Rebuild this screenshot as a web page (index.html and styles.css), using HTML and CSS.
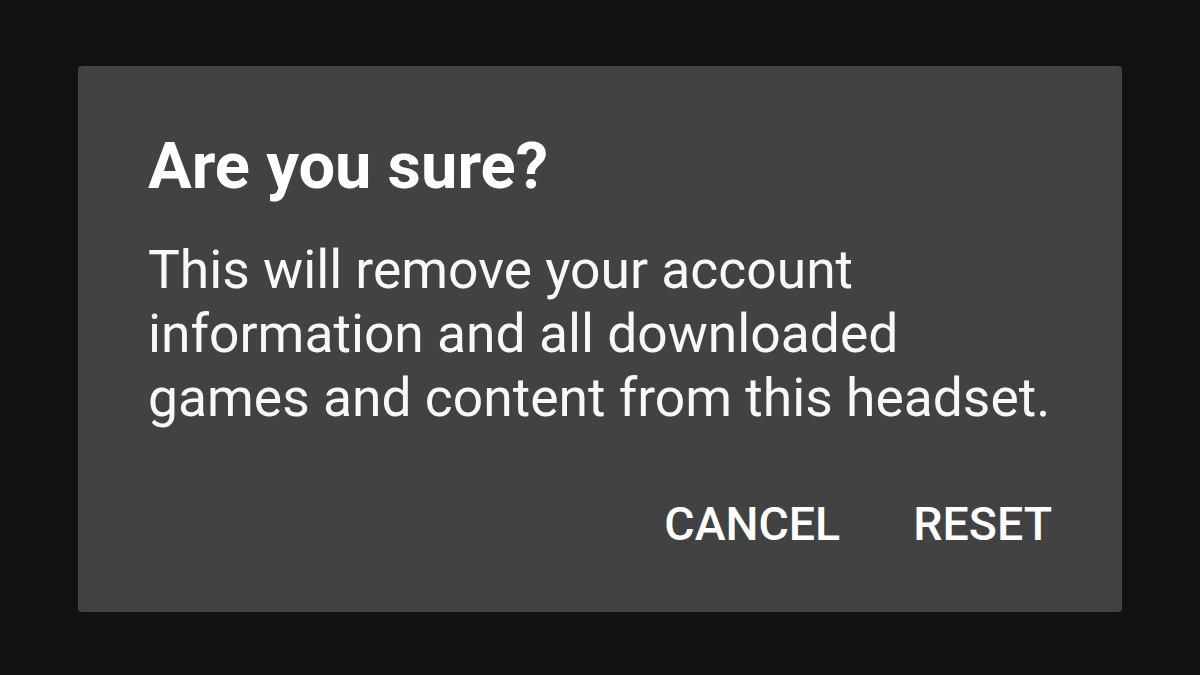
FILE: index.html
```html
<!DOCTYPE html>
<html lang="en">
<head>
    <meta charset="UTF-8">
    <title>Reset headset</title>
    <link rel="stylesheet" href="styles.css">
</head>
<body>
    <div class="screen">
        <div class="dialog">
            <h2 class="title">Are you sure?</h2>
            <p class="message">This will remove your account information and all downloaded games and content from this headset.</p>
            <div class="actions">
                <button class="action">CANCEL</button>
                <button class="action">RESET</button>
            </div>
        </div>
    </div>
</body>
</html>
```

FILE: styles.css
```css
html, body {
    margin: 0;
    padding: 0;
    background-color: #121212;
}
.screen {
    width: 1200px;
    height: 675px;
    padding: 66px 78px 0 78px;
    box-sizing: border-box;
    font-family: Roboto, "Liberation Sans", sans-serif;
}
.dialog {
    background-color: #424242;
    border-radius: 4px;
    height: 546px;
    padding: 0 68px 0 70px;
    box-sizing: border-box;
    overflow: hidden;
}
.title {
    margin: 0;
    padding-top: 62px;
    font-size: 65px;
    font-weight: 700;
    line-height: 76px;
    color: #ffffff;
}
.message {
    margin: 34px 0 0 0;
    font-size: 53.4px;
    line-height: 64px;
    color: #f8f8f8;
}
.actions {
    display: flex;
    justify-content: flex-end;
    gap: 73px;
    margin-top: 64px;
    margin-right: 2px;
}
.action {
    background: none;
    border: 0;
    padding: 0;
    font-family: Roboto, "Liberation Sans", sans-serif;
    font-size: 46.5px;
    font-weight: 500;
    line-height: 60px;
    color: #ffffff;
}
```
